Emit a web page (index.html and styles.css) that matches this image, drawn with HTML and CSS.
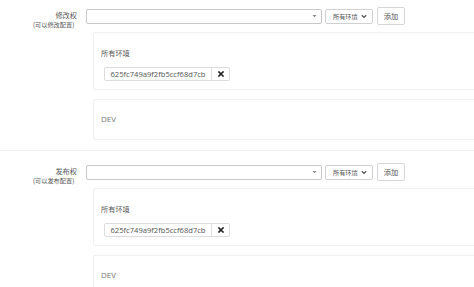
FILE: index.html
```html
<!DOCTYPE html>
<html>
<head>
<meta charset="utf-8">
<link rel="stylesheet" href="styles.css">
</head>
<body>
<div class="page">
  <section class="section first">
    <div class="row">
      <div class="label">
        <div class="label-main">修改权</div>
        <div class="label-sub">(可以修改配置)</div>
      </div>
      <div class="combo">
        <svg class="caret" width="5" height="4" viewBox="0 0 5 4"><path d="M0.5 1 L4.5 1 L2.5 3.2 Z" fill="#888"/></svg>
      </div>
      <div class="select">
        <span>所有环境</span>
        <svg class="chev" width="6" height="5" viewBox="0 0 6 5"><path d="M0.8 1.2 L3 3.4 L5.2 1.2" fill="none" stroke="#555" stroke-width="1.3"/></svg>
      </div>
      <button class="btn">添加</button>
    </div>
    <div class="panels">
      <div class="panel env">
        <div class="env-title">所有环境</div>
        <div class="tag">
          <span class="tag-text">625fc749a9f2fb5ccf68d7cb</span>
          <span class="tag-x"><svg width="6" height="6" viewBox="0 0 6 6"><path d="M1 1 L5 5 M5 1 L1 5" stroke="#222" stroke-width="1.6" stroke-linecap="square"/></svg></span>
        </div>
      </div>
      <div class="panel dev">DEV</div>
    </div>
  </section>
  <section class="section">
    <div class="row">
      <div class="label">
        <div class="label-main">发布权</div>
        <div class="label-sub">(可以发布配置)</div>
      </div>
      <div class="combo">
        <svg class="caret" width="5" height="4" viewBox="0 0 5 4"><path d="M0.5 1 L4.5 1 L2.5 3.2 Z" fill="#888"/></svg>
      </div>
      <div class="select">
        <span>所有环境</span>
        <svg class="chev" width="6" height="5" viewBox="0 0 6 5"><path d="M0.8 1.2 L3 3.4 L5.2 1.2" fill="none" stroke="#555" stroke-width="1.3"/></svg>
      </div>
      <button class="btn">添加</button>
    </div>
    <div class="panels">
      <div class="panel env">
        <div class="env-title">所有环境</div>
        <div class="tag">
          <span class="tag-text">625fc749a9f2fb5ccf68d7cb</span>
          <span class="tag-x"><svg width="6" height="6" viewBox="0 0 6 6"><path d="M1 1 L5 5 M5 1 L1 5" stroke="#222" stroke-width="1.6" stroke-linecap="square"/></svg></span>
        </div>
      </div>
      <div class="panel dev">DEV</div>
    </div>
  </section>
</div>
</body>
</html>
```
FILE: styles.css
```css
html, body {
  margin: 0;
  padding: 0;
  background: #fff;
  overflow: hidden;
}
body {
  font-family: "Open Sans", "Noto Sans CJK SC", sans-serif;
  color: #555;
  width: 474px;
  height: 287px;
}
.page {
  width: 480px;
}
.section {
  padding: 12px 0 10px;
  border-bottom: 1px solid #eeeeee;
}
.section.first {
  padding-top: 7px;
}
.row {
  display: flex;
  align-items: center;
  height: 18px;
}
.label {
  width: 77px;
  text-align: right;
  align-self: flex-start;
  padding-top: 3px;
  margin-right: 9px;
}
.label-main {
  font-size: 7.2px;
  line-height: 10px;
  color: #555;
}
.label-sub {
  font-size: 6.2px;
  line-height: 10px;
  color: #555;
  margin-right: 3px;
}
.combo {
  width: 234px;
  height: 13px;
  border: 1px solid #c8c8c8;
  border-radius: 2px;
  display: flex;
  align-items: center;
  justify-content: flex-end;
}
.caret {
  margin-right: 4px;
}
.select {
  margin-left: 3px;
  width: 46px;
  height: 13px;
  border: 1px solid #d0d0d0;
  border-radius: 2px;
  display: flex;
  align-items: center;
  font-size: 6.2px;
  color: #555;
}
.select span {
  margin-left: 7px;
  flex: 1;
}
.chev {
  margin-right: 5px;
}
.btn {
  margin-left: 4px;
  width: 28px;
  height: 18px;
  border: 1px solid #d6d6d6;
  border-radius: 2px;
  background: #fff;
  font-family: "Open Sans", "Noto Sans CJK SC", sans-serif;
  font-size: 7.2px;
  color: #555;
  padding: 0;
  display: flex;
  align-items: center;
  justify-content: center;
}
.panels {
  margin-left: 93px;
  margin-top: 7px;
  display: flex;
  flex-direction: column;
  gap: 9px;
}
.panel {
  border: 1px solid #f1f1f1;
  border-radius: 2px;
  padding-left: 7px;
}
.env {
  padding-top: 15px;
  box-sizing: border-box;
  height: 58px;
}
.env-title {
  font-size: 7.2px;
  line-height: 10px;
  color: #555;
}
.tag {
  margin-top: 9px;
  margin-left: 3px;
  display: inline-flex;
  height: 14px;
  border: 1px solid #dddddd;
  border-radius: 2px;
  box-sizing: border-box;
}
.tag-text {
  width: 106px;
  display: flex;
  align-items: center;
  justify-content: center;
  font-size: 7.6px;
  color: #555;
  border-right: 1px solid #dddddd;
}
.tag-x {
  width: 17px;
  display: flex;
  align-items: center;
  justify-content: center;
}
.dev {
  height: 41px;
  box-sizing: border-box;
  padding-top: 14px;
  font-size: 8px;
  line-height: 10px;
  color: #777;
}
```
